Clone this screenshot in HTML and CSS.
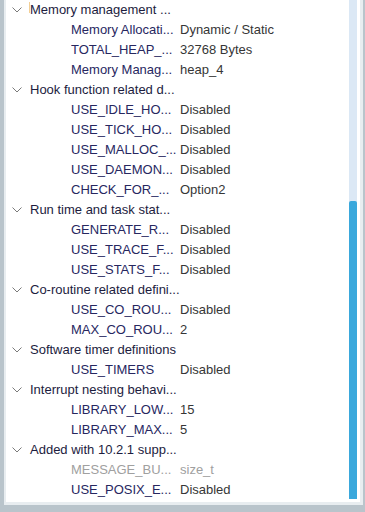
FILE: index.html
```html
<!DOCTYPE html>
<html>
<head>
<meta charset="utf-8">
<link rel="stylesheet" href="styles.css">
</head>
<body>
<div class="frame">
  <div class="panel">
    <div class="tree">
      <div class="row group focus"><span class="chev"><svg width="10" height="6" viewBox="0 0 10 6"><polyline points="0.5,0.5 5,5 9.5,0.5" fill="none" stroke="#7a7a7a" stroke-width="1"/></svg></span><span class="glabel">Memory management ...</span></div>
      <div class="row item"><span class="name">Memory Allocati...</span><span class="val">Dynamic / Static</span></div>
      <div class="row item"><span class="name">TOTAL_HEAP_...</span><span class="val">32768 Bytes</span></div>
      <div class="row item"><span class="name">Memory Manag...</span><span class="val">heap_4</span></div>

      <div class="row group"><span class="chev"><svg width="10" height="6" viewBox="0 0 10 6"><polyline points="0.5,0.5 5,5 9.5,0.5" fill="none" stroke="#7a7a7a" stroke-width="1"/></svg></span><span class="glabel">Hook function related d...</span></div>
      <div class="row item"><span class="name">USE_IDLE_HO...</span><span class="val">Disabled</span></div>
      <div class="row item"><span class="name">USE_TICK_HO...</span><span class="val">Disabled</span></div>
      <div class="row item"><span class="name">USE_MALLOC_...</span><span class="val">Disabled</span></div>
      <div class="row item"><span class="name">USE_DAEMON...</span><span class="val">Disabled</span></div>
      <div class="row item"><span class="name">CHECK_FOR_...</span><span class="val">Option2</span></div>

      <div class="row group"><span class="chev"><svg width="10" height="6" viewBox="0 0 10 6"><polyline points="0.5,0.5 5,5 9.5,0.5" fill="none" stroke="#7a7a7a" stroke-width="1"/></svg></span><span class="glabel">Run time and task stat...</span></div>
      <div class="row item"><span class="name">GENERATE_R...</span><span class="val">Disabled</span></div>
      <div class="row item"><span class="name">USE_TRACE_F...</span><span class="val">Disabled</span></div>
      <div class="row item"><span class="name">USE_STATS_F...</span><span class="val">Disabled</span></div>

      <div class="row group"><span class="chev"><svg width="10" height="6" viewBox="0 0 10 6"><polyline points="0.5,0.5 5,5 9.5,0.5" fill="none" stroke="#7a7a7a" stroke-width="1"/></svg></span><span class="glabel">Co-routine related defini...</span></div>
      <div class="row item"><span class="name">USE_CO_ROU...</span><span class="val">Disabled</span></div>
      <div class="row item"><span class="name">MAX_CO_ROU...</span><span class="val">2</span></div>

      <div class="row group"><span class="chev"><svg width="10" height="6" viewBox="0 0 10 6"><polyline points="0.5,0.5 5,5 9.5,0.5" fill="none" stroke="#7a7a7a" stroke-width="1"/></svg></span><span class="glabel">Software timer definitions</span></div>
      <div class="row item"><span class="name">USE_TIMERS</span><span class="val">Disabled</span></div>

      <div class="row group"><span class="chev"><svg width="10" height="6" viewBox="0 0 10 6"><polyline points="0.5,0.5 5,5 9.5,0.5" fill="none" stroke="#7a7a7a" stroke-width="1"/></svg></span><span class="glabel">Interrupt nesting behavi...</span></div>
      <div class="row item"><span class="name">LIBRARY_LOW...</span><span class="val">15</span></div>
      <div class="row item"><span class="name">LIBRARY_MAX...</span><span class="val">5</span></div>

      <div class="row group"><span class="chev"><svg width="10" height="6" viewBox="0 0 10 6"><polyline points="0.5,0.5 5,5 9.5,0.5" fill="none" stroke="#7a7a7a" stroke-width="1"/></svg></span><span class="glabel">Added with 10.2.1 supp...</span></div>
      <div class="row item disabled"><span class="name">MESSAGE_BU...</span><span class="val">size_t</span></div>
      <div class="row item"><span class="name">USE_POSIX_E...</span><span class="val">Disabled</span></div>
    </div>
    <div class="scrollbar">
      <div class="thumb"></div>
    </div>
  </div>
</div>
</body>
</html>
```
FILE: styles.css
```css
html, body {
  margin: 0;
  padding: 0;
}
body {
  background: #b9c4cb;
  width: 365px;
  height: 512px;
  overflow: hidden;
  font-family: "Liberation Sans", Arial, sans-serif;
  font-size: 13px;
}
.frame {
  padding: 0 2px 7px 4px;
  height: 512px;
  box-sizing: border-box;
}
.panel {
  height: 505px;
  box-sizing: border-box;
  background: #ffffff;
  border-left: 2px solid #e8edf0;
  border-right: 3px solid #e8edf0;
  border-bottom: 3px solid #e8edf0;
  display: flex;
  overflow: hidden;
}
.tree {
  flex: 1;
  min-width: 0;
}
.row {
  height: 20px;
  display: flex;
  align-items: center;
  white-space: nowrap;
  line-height: 20px;
}
.group {
  padding-left: 6px;
  position: relative;
}
.chev {
  width: 18px;
  display: flex;
  align-items: center;
  height: 20px;
  padding-bottom: 1px;
  box-sizing: border-box;
}
.chev svg {
  display: block;
}
.glabel {
  color: #1c1c3e;
}
.focus::after {
  content: "";
  position: absolute;
  left: 23px;
  top: 2px;
  width: 1px;
  height: 11px;
  background: #f3cf95;
}
.item {
  padding-left: 65px;
}
.name {
  width: 109px;
  color: #27275f;
  overflow: hidden;
}
.val {
  color: #363636;
}
.disabled .name,
.disabled .val {
  color: #a0a0a0;
}
.scrollbar {
  width: 8px;
  margin-right: 3px;
  height: 499px;
  background: #dbe8f5;
  display: flex;
  flex-direction: column;
  justify-content: flex-end;
}
.thumb {
  height: 298px;
  background: #3aa8dc;
  border-radius: 2px 2px 0 0;
}
```
